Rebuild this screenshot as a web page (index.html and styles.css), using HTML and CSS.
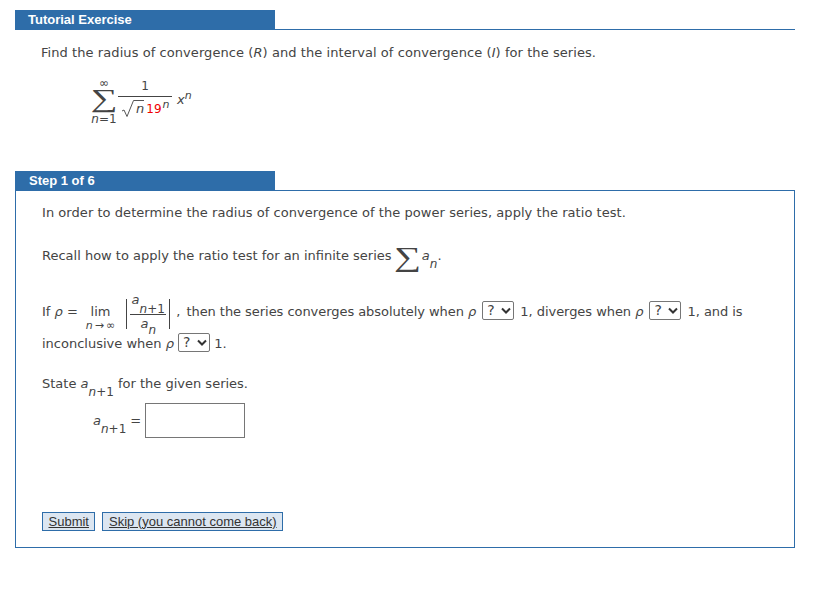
FILE: index.html
```html
<!DOCTYPE html>
<html lang="en">
<head>
<meta charset="UTF-8">
<title>Tutorial Exercise</title>
<link rel="stylesheet" href="styles.css">
</head>
<body>

<div class="section-head"><div class="tab">Tutorial Exercise</div></div>
<div class="intro">
    <p class="question">Find the radius of convergence (<i>R</i>) and the interval of convergence (<i>I</i>) for the series.</p>
    <div class="series">
        <div class="sum">
            <span class="sum-top">∞</span>
            <span class="sum-sign">∑</span>
            <span class="sum-bottom"><i>n</i>=1</span>
        </div>
        <div class="frac">
            <span class="frac-top">1</span>
            <span class="frac-bottom">
                <svg class="radical" width="14" height="18" viewBox="0 0 14 18"><path d="M0 11 L2 10 L5 16.5 L11.5 0.5 L14 0.5" fill="none" stroke="#555" stroke-width="1"/></svg><i class="under">n</i><span class="red">19</span><sup><i>n</i></sup>
            </span>
        </div>
        <div class="xn"><i>x</i><sup><i>n</i></sup></div>
    </div>
</div>

<div class="section-head"><div class="tab step-tab">Step 1 of 6</div></div>
<div class="step">
    <p class="line-first">In order to determine the radius of convergence of the power series, apply the ratio test.</p>
    <p class="line-recall">Recall how to apply the ratio test for an infinite series
        <span class="sum-inline">∑</span><span class="var"><i>a</i><sub><i>n</i></sub></span><span class="dot">.</span>
    </p>
    <div class="line-if">
        <span>If <i>ρ</i> =</span>
        <span class="lim">lim<small><i>n</i><span class="arrow">→</span>∞</small></span>
        <span class="abs">
            <span class="abs-top"><i>a</i><sub><i>n</i>+1</sub></span>
            <span class="abs-bottom"><i>a</i><sub><i>n</i></sub></span>
        </span>
        <span class="rest"><span class="comma">,</span> then the series converges absolutely when <i>ρ</i> <span class="pick">?<svg width="10" height="7" viewBox="0 0 10 7"><path d="M1 1.5 L5 5.5 L9 1.5" fill="none" stroke="#333" stroke-width="2"/></svg></span> 1, diverges when <i>ρ</i> <span class="pick">?<svg width="10" height="7" viewBox="0 0 10 7"><path d="M1 1.5 L5 5.5 L9 1.5" fill="none" stroke="#333" stroke-width="2"/></svg></span> 1, and is</span>
    </div>
    <p class="line-inconclusive">inconclusive when <i>ρ</i> <span class="pick">?<svg width="10" height="7" viewBox="0 0 10 7"><path d="M1 1.5 L5 5.5 L9 1.5" fill="none" stroke="#333" stroke-width="2"/></svg></span> 1.</p>
    <p class="line-state">State <span class="var"><i>a</i><sub><i>n</i>+1</sub></span> for the given series.</p>
    <div class="answer">
        <span class="var answer-var"><i>a</i><sub><i>n</i>+1</sub></span>
        <span class="equals">=</span>
        <input class="answer-box" type="text">
    </div>
    <div class="buttons">
        <button class="btn">Submit</button>
        <button class="btn">Skip (you cannot come back)</button>
    </div>
</div>

</body>
</html>
```

FILE: styles.css
```css
body, html {
    margin: 0;
    padding: 0;
    background-color: #fff;
    font-family: "DejaVu Sans", Verdana, sans-serif;
    font-size: 13px;
    color: #444;
}
body {
    padding: 10px 23px 0 15px;
}
p {
    margin: 0;
}
sub, sup {
    font-size: 12px;
    line-height: 0;
}
.section-head {
    border-bottom: 1px solid #2e6da9;
    height: 19px;
}
.tab {
    width: 247px;
    height: 20px;
    padding-left: 13px;
    background-color: #2e6da9;
    color: #fff;
    font-family: "Liberation Sans", Arial, sans-serif;
    font-size: 13px;
    font-weight: bold;
    line-height: 19px;
}
.step-tab {
    width: 246px;
    padding-left: 14px;
}
.intro {
    height: 141px;
    padding: 15px 0 0 26px;
    box-sizing: border-box;
}
.question {
    line-height: 16px;
    letter-spacing: 0.07px;
}
.series {
    display: flex;
    align-items: flex-start;
    margin: 17px 0 0 51px;
}
.sum {
    display: flex;
    flex-direction: column;
    align-items: center;
    width: 24px;
    font-size: 12px;
}
.sum-top {
    font-size: 12px;
    line-height: 10px;
}
.sum-sign {
    font-family: "Liberation Serif", serif;
    font-size: 26px;
    line-height: 22px;
    transform: scaleX(1.45);
}
.sum-bottom {
    line-height: 14px;
    margin-top: 2px;
}
.frac {
    display: flex;
    flex-direction: column;
    align-items: center;
    width: 54px;
    margin-left: 2px;
}
.frac-top {
    height: 18px;
    line-height: 16px;
    font-size: 12px;
}
.frac-bottom {
    display: flex;
    align-items: flex-start;
    box-sizing: border-box;
    width: 100%;
    height: 22px;
    padding-left: 4px;
    border-top: 1px solid #444;
}
.radical {
    margin-top: 3px;
}
.under {
    box-sizing: border-box;
    height: 18px;
    margin-top: 3px;
    border-top: 1px solid #555;
    line-height: 16px;
}
.red {
    margin-left: 2px;
    color: #f00000;
    font-size: 12px;
    line-height: 25px;
}
.frac-bottom sup {
    font-size: 11px;
    line-height: 16px;
    margin-left: 1px;
}
.xn {
    margin: 14px 0 0 5px;
    line-height: 16px;
}
.xn sup {
    font-size: 11px;
}
.step {
    height: 357px;
    box-sizing: border-box;
    border: 1px solid #2e6da9;
    border-top: none;
    padding: 14px 0 0 26px;
    line-height: 16px;
}
.line-first {
    letter-spacing: 0.05px;
}
.line-recall {
    display: flex;
    align-items: center;
    gap: 4px;
    height: 16px;
    margin-top: 27px;
}
.sum-inline {
    margin: 1px 1px 0 2px;
    font-family: "Liberation Serif", serif;
    font-size: 27px;
    line-height: 16px;
    transform: scaleX(1.4);
}
.var sub {
    vertical-align: -8px;
}
.dot {
    margin-left: -4px;
}
.line-if {
    display: flex;
    align-items: flex-start;
    height: 40px;
    margin-top: 40px;
    white-space: pre-wrap;
}
.lim {
    display: flex;
    flex-direction: column;
    align-items: center;
    margin-left: 8px;
}
.lim small {
    font-size: 11px;
    line-height: 11px;
}
.arrow {
    margin: 0 2px;
}
.abs {
    display: flex;
    flex-direction: column;
    align-items: center;
    box-sizing: border-box;
    width: 44px;
    height: 30px;
    margin: -5px 0 0 11px;
    padding: 0 3px;
    border-left: 1px solid #444;
    border-right: 1px solid #444;
}
.abs-top {
    flex: none;
    width: 100%;
    height: 15px;
    border-bottom: 1px solid #444;
    line-height: 1px;
    text-align: center;
}
.abs-top sub {
    vertical-align: -9px;
}
.abs-bottom {
    flex: none;
    line-height: 17px;
}
.abs-bottom sub {
    vertical-align: -6px;
}
.rest {
    margin-left: 6px;
    letter-spacing: -0.05px;
}
.comma {
    margin-right: 2px;
}
.pick {
    display: inline-flex;
    align-items: center;
    justify-content: space-between;
    box-sizing: border-box;
    width: 32px;
    height: 19px;
    margin: -4px 2px;
    padding: 0 2px 0 4px;
    border: 1px solid #767676;
    border-radius: 2px;
    font-size: 14px;
    vertical-align: 1px;
}
.line-inconclusive {
    margin-top: -8px;
}
.line-inconclusive .pick {
    margin: -4px 0;
}
.line-state {
    margin-top: 24px;
}
.answer {
    display: flex;
    align-items: center;
    margin: 11px 0 0 51px;
}
.answer-var sub {
    vertical-align: -8px;
}
.equals {
    margin: 0 4px;
}
.answer-box {
    box-sizing: border-box;
    width: 100px;
    height: 35px;
    margin: 0;
    padding: 0;
    border: 1px solid #767676;
    background: #fff;
}
.buttons {
    display: flex;
    gap: 7px;
    margin-top: 74px;
}
.btn {
    box-sizing: border-box;
    height: 19px;
    padding: 0 5.5px;
    border: 1px solid #2e6da9;
    background-color: #dce6f1;
    color: #333;
    font-family: "Liberation Sans", Arial, sans-serif;
    font-size: 13px;
    line-height: 16px;
    text-decoration: underline;
    cursor: pointer;
}
```
